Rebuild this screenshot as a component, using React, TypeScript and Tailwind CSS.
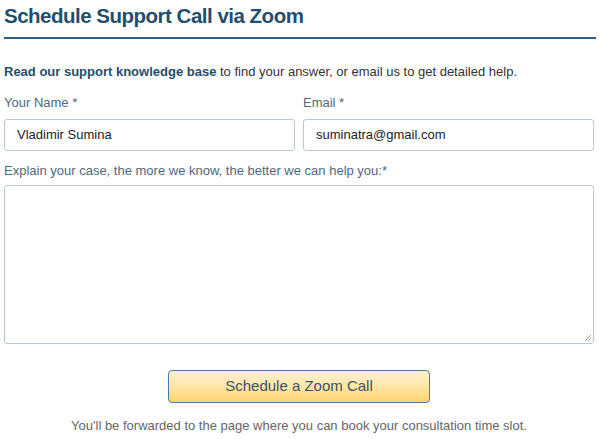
import React from "react";

export default function App() {
  return (
    <div
      className="w-[600px] h-[439px] bg-white overflow-hidden px-[4px] text-[#333]"
      style={{ fontFamily: '"Liberation Sans", Arial, sans-serif' }}
    >
      <h1 className="pt-[3px] text-[20.5px] leading-[26px] tracking-[-0.5px] font-bold text-[#1f4e6f]">
        Schedule Support Call via Zoom
      </h1>
      <div className="mt-[8px] h-[2px] w-[592px] bg-[#2c5f84]" />
      <p className="mt-[25px] text-[13px] leading-[16px] text-[#333]">
        <span className="font-bold text-[#1f4e6f]">Read our support knowledge base</span> to find
        your answer, or email us to get detailed help.
      </p>
      <div className="mt-[15px] grid grid-cols-2 gap-[8px] w-[590px]">
        <div className="flex flex-col">
          <label className="text-[13px] leading-[16px] text-[#4d6a80]">Your Name *</label>
          <div className="mt-[8px] h-[32px] rounded-[3px] border border-[#b7c9d6] flex items-center px-[12px] text-[13px] text-[#222]">
            Vladimir Sumina
          </div>
        </div>
        <div className="flex flex-col">
          <label className="text-[13px] leading-[16px] text-[#4d6a80]">Email *</label>
          <div className="mt-[8px] h-[32px] rounded-[3px] border border-[#b7c9d6] flex items-center px-[12px] text-[13px] text-[#222]">
            suminatra@gmail.com
          </div>
        </div>
      </div>
      <label className="block mt-[12px] text-[13px] leading-[16px] text-[#4d6a80]">
        Explain your case, the more we know, the better we can help you:*
      </label>
      <div className="relative mt-[6px] h-[159px] w-[590px] rounded-[3px] border border-[#b7c9d6]">
        <svg className="absolute right-[1px] bottom-[1px]" width="9" height="9" viewBox="0 0 9 9">
          <path d="M8 2 L2 8 M8 5 L5 8" stroke="#999" strokeWidth="1" />
        </svg>
      </div>
      <div className="mt-[26px] flex justify-center w-[590px]">
        <button
          className="w-[262px] h-[33px] rounded-[4px] border border-[#4a7aa0] text-[15px] text-[#3b5368]"
          style={{ backgroundImage: "linear-gradient(#fff1cf, #ffe6a8 50%, #ffd46c)" }}
        >
          Schedule a Zoom Call
        </button>
      </div>
      <p className="mt-[15px] text-center w-[590px] text-[13px] leading-[16px] text-[#666]">
        You'll be forwarded to the page where you can book your consultation time slot.
      </p>
    </div>
  );
}
